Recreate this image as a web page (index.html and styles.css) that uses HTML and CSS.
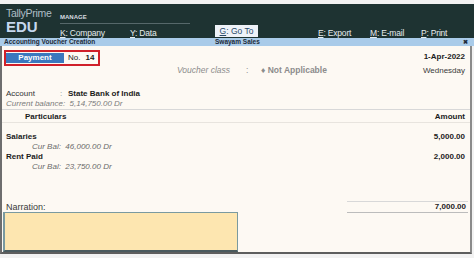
FILE: index.html
```html
<!DOCTYPE html>
<html lang="en">
<head>
  <meta charset="UTF-8">
  <title>TallyPrime - Accounting Voucher Creation</title>
  <link rel="stylesheet" href="styles.css">
</head>
<body>
  <div class="window">
    <header class="topbar">
      <div class="brand">
        <div class="brand-name">TallyPrime</div>
        <div class="brand-edu">EDU</div>
      </div>
      <div class="manage">
        <div class="manage-label">MANAGE</div>
        <div class="manage-items">
          <span class="menu-item company"><u>K</u>: Company</span>
          <span class="menu-item"><u>Y</u>: Data</span>
        </div>
      </div>
      <span class="goto"><u>G</u>: Go To</span>
      <div class="actions">
        <span class="menu-item export"><u>E</u>: Export</span>
        <span class="menu-item email"><u>M</u>: E-mail</span>
        <span class="menu-item"><u>P</u>: Print</span>
      </div>
    </header>

    <div class="titlebar">
      <span class="title-left">Accounting Voucher Creation</span>
      <span class="title-mid">Swayam Sales</span>
      <span class="title-close">&#10006;</span>
    </div>

    <main class="voucher">
      <div class="voucher-head">
        <div class="voucher-type">
          <span class="type-badge">Payment</span>
          <span class="no-label">No.</span>
          <span class="no-value">14</span>
        </div>
        <div class="voucher-date">1-Apr-2022</div>
      </div>

      <div class="class-row">
        <span class="class-label">Voucher class</span>
        <span class="class-colon">:</span>
        <span class="class-value">&#9830; Not Applicable</span>
        <span class="weekday">Wednesday</span>
      </div>

      <div class="account-row">
        <span class="account-label">Account</span>
        <span class="account-colon">:</span>
        <span class="account-value">State Bank of India</span>
      </div>
      <div class="balance-row">Current balance:&nbsp; 5,14,750.00 Dr</div>

      <div class="table-head">
        <span class="th-particulars">Particulars</span>
        <span class="th-amount">Amount</span>
      </div>

      <div class="entries">
        <div class="entry">
          <div class="entry-line">
            <span class="ledger">Salaries</span>
            <span class="amount">5,000.00</span>
          </div>
          <div class="cur-bal">Cur Bal:&nbsp; 46,000.00 Dr</div>
        </div>
        <div class="entry">
          <div class="entry-line">
            <span class="ledger">Rent Paid</span>
            <span class="amount">2,000.00</span>
          </div>
          <div class="cur-bal">Cur Bal:&nbsp; 23,750.00 Dr</div>
        </div>
      </div>

      <div class="footer-row">
        <div class="narration">
          <div class="narration-label">Narration:</div>
          <div class="narration-box"></div>
        </div>
        <div class="total">7,000.00</div>
      </div>
    </main>
  </div>
</body>
</html>
```

FILE: styles.css
```css
body {
  margin: 0;
  padding: 0;
  background-color: #ffffff;
  font-family: "Liberation Sans", Arial, sans-serif;
  font-size: 8px;
  line-height: 10px;
  color: #1c1c1c;
}

.window {
  width: 474px;
  height: 258px;
  background-color: #f2f2f2;
  padding-top: 4px;
  box-sizing: border-box;
  display: flex;
  flex-direction: column;
}

/* top menu bar */
.topbar {
  height: 34px;
  flex-shrink: 0;
  background-color: #1e3332;
  display: flex;
  align-items: flex-start;
  padding-left: 6px;
  box-sizing: border-box;
  color: #e8eef0;
}

.brand {
  width: 54px;
  margin-top: 3px;
}

.brand-name {
  font-size: 10.5px;
  line-height: 12px;
  color: #aebfc8;
  letter-spacing: -0.3px;
}

.brand-edu {
  font-size: 15px;
  line-height: 15px;
  font-weight: bold;
  color: #c6d8ee;
}

.manage {
  width: 130px;
  margin-top: 9px;
  margin-right: 25px;
}

.manage-label {
  font-size: 6px;
  line-height: 8px;
  font-weight: bold;
  color: #d8dde0;
  padding-bottom: 2px;
  border-bottom: 1px solid #56686a;
  margin-bottom: 4px;
}

.manage-items {
  display: flex;
}

.menu-item {
  font-size: 8.5px;
  color: #e6ecee;
  letter-spacing: -0.2px;
}

.company {
  width: 70px;
}

.goto {
  margin-top: 21px;
  background-color: #eef2f8;
  color: #2a4a6a;
  width: 43px;
  height: 12px;
  line-height: 12px;
  text-align: center;
  font-size: 8.5px;
}

.actions {
  display: flex;
  margin-top: 24px;
  margin-left: 60px;
}

.export {
  width: 52px;
}

.email {
  width: 51px;
}

/* title bar */
.titlebar {
  height: 8px;
  flex-shrink: 0;
  background-color: #a9cbe9;
  display: flex;
  align-items: center;
  padding: 0 6px 0 4px;
  font-size: 6.5px;
  font-weight: bold;
  color: #1c2a38;
}

.title-left {
  width: 211px;
}

.title-mid {
  flex: 1;
}

.title-close {
  font-size: 6px;
}

/* voucher body */
.voucher {
  height: 208px;
  flex-shrink: 0;
  box-sizing: border-box;
  background-color: #fdf9f3;
  border-left: 2px solid #6e6e6e;
  border-right: 2px solid #8a8a8a;
  border-bottom: 2px solid #5e5e5e;
  margin-right: 2px;
  display: flex;
  flex-direction: column;
}

.voucher-head {
  display: flex;
  justify-content: space-between;
  align-items: flex-start;
  padding: 4px 5px 0 2px;
}

.voucher-type {
  display: flex;
  align-items: flex-start;
  border: 2px solid #d0202a;
  padding-top: 1px;
  width: 96px;
  height: 16px;
  box-sizing: border-box;
}

.type-badge {
  flex-shrink: 0;
  background-color: #3b78be;
  color: #ffffff;
  font-weight: bold;
  width: 58px;
  height: 10px;
  text-align: center;
  margin-right: 4px;
}

.no-value {
  font-weight: bold;
  margin-left: 5px;
}

.voucher-date {
  font-weight: bold;
  margin-top: 2px;
}

.class-row {
  display: flex;
  align-items: baseline;
  padding: 0 5px 0 175px;
  margin-top: -1px;
  color: #8c8c8c;
  font-size: 8.5px;
}

.class-label {
  font-style: italic;
  width: 69px;
}

.class-colon {
  width: 15px;
}

.class-value {
  font-weight: bold;
  flex: 1;
}

.weekday {
  color: #3a3a3a;
  font-size: 8px;
}

.account-row {
  display: flex;
  padding: 0 4px;
  margin-top: 13px;
  color: #333333;
}

.account-label {
  width: 54px;
}

.account-colon {
  color: #8c8c8c;
  width: 8px;
}

.account-value {
  font-weight: bold;
  color: #1c1c1c;
}

.balance-row {
  padding: 0 4px;
  font-style: italic;
  color: #7c7c7c;
}

.table-head {
  display: flex;
  justify-content: space-between;
  font-weight: bold;
  padding: 2px 5px 0 23px;
  border-top: 1px solid #d8d8d8;
  border-bottom: 1px solid #e8e4de;
}

.entries {
  padding: 9px 5px 0 4px;
  flex: 1;
}

.entry-line {
  display: flex;
  justify-content: space-between;
  font-weight: bold;
}

.cur-bal {
  font-style: italic;
  color: #6a6a6a;
  padding-left: 26px;
}

.footer-row {
  display: flex;
  justify-content: space-between;
  align-items: flex-start;
}

.narration {
  width: 235px;
  margin-left: 1px;
}

.narration-label {
  padding-left: 3px;
  color: #3a3a3a;
  font-size: 9px;
}

.narration-box {
  height: 40px;
  box-sizing: border-box;
  background-color: #fde6b0;
  border: 1px solid #7a9aa0;
  border-left-width: 2px;
  border-bottom: 2px solid #4a5a5e;
}

.total {
  width: 121px;
  text-align: right;
  font-weight: bold;
  padding-right: 2px;
  box-sizing: border-box;
  margin-right: 2px;
  margin-top: -1px;
  border-top: 1px solid #d8d8d8;
  border-bottom: 1px solid #bcbcbc;
}
```
